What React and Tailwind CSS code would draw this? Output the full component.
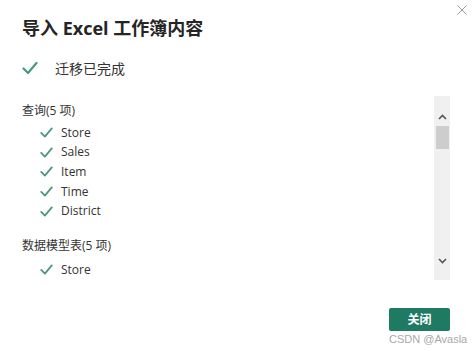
import React from "react";

const queries = ["Store", "Sales", "Item", "Time", "District"];
const tables = ["Store"];

function Check({ size = 14 }) {
  return (
    <svg width={size} height={size} viewBox="0 0 16 16" fill="none">
      <path d="M1.5 8.5 L6 13 L14.5 3" stroke="#4d9683" strokeWidth="2.2" strokeLinecap="round" strokeLinejoin="round" />
    </svg>
  );
}

function Item({ name }) {
  return (
    <div className="flex items-center h-[19.6px] pl-[18px]">
      <Check size={13} />
      <span className="ml-[8px] text-[12px] text-[#333]">{name}</span>
    </div>
  );
}

export default function App() {
  return (
    <div
      className="relative w-[474px] h-[351px] bg-white overflow-hidden"
      style={{ fontFamily: '"Open Sans", "Noto Sans CJK SC", sans-serif' }}
    >
      <button className="absolute right-[6px] top-[4px] w-[12px] h-[12px] flex items-center justify-center">
        <svg width="10" height="10" viewBox="0 0 10 10">
          <path d="M0.5 0.5 L9.5 9.5 M9.5 0.5 L0.5 9.5" stroke="#9a9a9a" strokeWidth="1" />
        </svg>
      </button>

      <div className="flex flex-col pl-[22px] pr-[24px] pt-[15px]">
        <h1 className="text-[18px] font-bold leading-[26px] text-[#252525]">导入 Excel 工作簿内容</h1>

        <div className="flex items-center mt-[17px] h-[20px]">
          <Check size={16} />
          <span className="ml-[17px] text-[14px] text-[#333]">迁移已完成</span>
        </div>

        <div className="flex mt-[18px] h-[184px]">
          <div className="flex-1 overflow-hidden">
            <div className="text-[12px] leading-[20px] text-[#333] mt-[5px]">查询(5 项)</div>
            <div className="mt-[2px]">
              {queries.map((q) => (
                <Item key={"q" + q} name={q} />
              ))}
            </div>
            <div className="text-[12px] leading-[20px] text-[#333] mt-[15px]">数据模型表(5 项)</div>
            <div className="mt-[4px]">
              {tables.map((t) => (
                <Item key={"t" + t} name={t} />
              ))}
            </div>
          </div>
          <div className="w-[16px] bg-[#f0f0f0] flex flex-col items-center">
            <div className="h-[30px] flex items-end justify-center pb-[6px]">
              <svg width="9" height="6" viewBox="0 0 9 6">
                <path d="M1 5 L4.5 1.5 L8 5" stroke="#555" strokeWidth="1.6" fill="none" />
              </svg>
            </div>
            <div className="w-[13px] h-[23px] bg-[#cdcdcd]" />
            <div className="flex-1" />
            <div className="h-[30px] flex items-start justify-center pt-[8px]">
              <svg width="9" height="6" viewBox="0 0 9 6">
                <path d="M1 1 L4.5 4.5 L8 1" stroke="#555" strokeWidth="1.6" fill="none" />
              </svg>
            </div>
          </div>
        </div>

        <div className="flex justify-end mt-[28px]">
          <button className="w-[61px] h-[23px] bg-[#1e7a63] rounded-[2px] text-white text-[12px] font-bold">
            关闭
          </button>
        </div>
      </div>

      <div className="absolute left-[389px] top-[332px] text-[11px] leading-[14px] text-[#a8a8a8]" style={{ fontFamily: '"Liberation Sans", sans-serif' }}>
        CSDN @Avasla
      </div>
    </div>
  );
}
